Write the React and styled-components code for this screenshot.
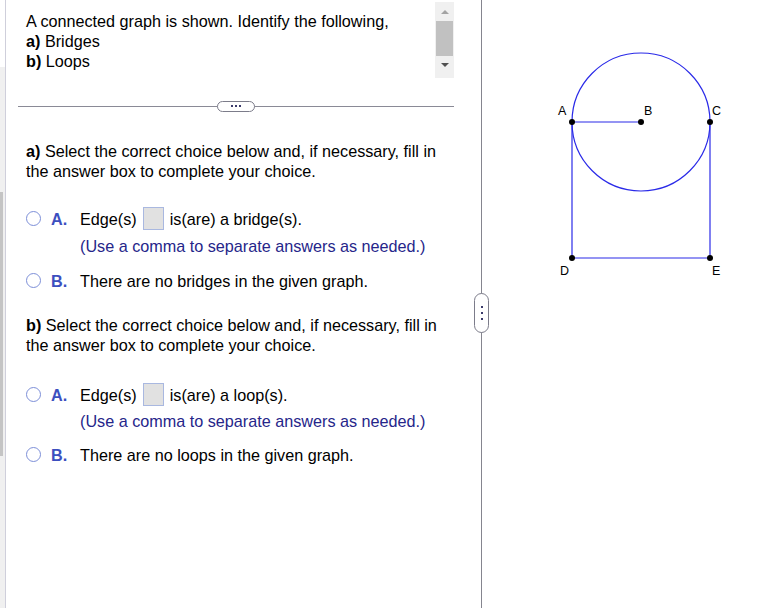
import styled, { createGlobalStyle } from 'styled-components'

const Global = createGlobalStyle`
    body {
        margin: 0;
        background: #fff;
        font-family: Arial, "Liberation Sans", sans-serif;
        color: #000;
    }
`

const Page = styled.div`
    display: flex;
    height: 608px;
    width: 767px;
    overflow: hidden;
`

const Gutter = styled.div`
    width: 5px;
    border-right: 1px solid #cfcfdb;
    display: flex;
    flex-direction: column;
`

const GutterTrack = styled.div`
    margin-top: 67px;
    flex: 1;
    background: #f0f0f0;
    padding-top: 125px;
`

const GutterThumb = styled.div`
    width: 3px;
    height: 264px;
    background: #c4c4c4;
`

const LeftPanel = styled.div`
    width: 475px;
    display: flex;
    flex-direction: column;
`

const Splitter = styled.div`
    width: 1px;
    background: #85858f;
    display: flex;
    align-items: center;
    justify-content: center;
    padding-top: 18px;
`

const SplitHandle = styled.div`
    flex-shrink: 0;
    width: 13px;
    height: 38px;
    border: 1px solid #7c7c8a;
    border-radius: 8px;
    background: #fff;
    display: flex;
    flex-direction: column;
    align-items: center;
    justify-content: center;
    gap: 4px;
`

const QuestionArea = styled.div`
    display: flex;
    height: 76px;
    margin-top: 2px;
    padding-right: 27px;
`

const QuestionText = styled.div`
    flex: 1;
    padding: 9px 0 0 20px;
    font-size: 16.2px;
    line-height: 20px;
`

const ScrollBar = styled.div`
    width: 19px;
    background: #f0f0f0;
    display: flex;
    flex-direction: column;
    align-items: center;
`

const Arrow = styled.div`
    width: 0;
    height: 0;
    border-left: 4px solid transparent;
    border-right: 4px solid transparent;
    ${p => p.up
        ? 'border-bottom: 4px solid #a3a3a3; margin: 8px 0 7px;'
        : 'border-top: 4px solid #505050; margin: 7px 0 0;'}
`

const Thumb = styled.div`
    width: 17px;
    height: 35px;
    background: #c1c1c1;
`

const Divider = styled.div`
    margin: 21px 27px 0 12px;
    height: 14px;
    display: flex;
    align-items: center;
    justify-content: center;
    background: linear-gradient(#8a8a96, #8a8a96) center / 100% 1px no-repeat;
`

const Pill = styled.div`
    width: 36px;
    height: 9px;
    border: 1px solid #7c7c8a;
    border-radius: 6px;
    background: #fff;
    display: flex;
    align-items: center;
    justify-content: center;
    gap: 2px;
`

const Dot = styled.span`
    width: 2px;
    height: 2px;
    background: #3b3b6b;
`

const Part = styled.div`
    padding-left: 20px;
    margin-top: ${p => p.top}px;
    font-size: 16.2px;
    line-height: 20px;
`

const Prompt = styled.div`
    width: 425px;
    margin-bottom: ${p => p.gap}px;
`

const Option = styled.div`
    display: flex;
    align-items: flex-start;
    margin-bottom: ${p => p.gap || 0}px;
`

const Radio = styled.span`
    width: 13px;
    height: 13px;
    border: 1.5px solid #7d8fd8;
    border-radius: 50%;
    margin: 2px 10px 0 0;
    flex-shrink: 0;
`

const Letter = styled.span`
    width: 29px;
    color: #3c4fbf;
    font-weight: bold;
`

const Body = styled.div`
    display: flex;
    flex-direction: column;
`

const Line = styled.div`
    display: flex;
    align-items: center;
    height: 20px;
`

const AnswerBox = styled.span`
    display: inline-block;
    box-sizing: border-box;
    width: 21px;
    height: 23px;
    margin: -2px 6px -1px 6px;
    background: #e1e1e1;
    border: 1px solid #a9b8e0;
`

const Hint = styled.div`
    color: #26268a;
    margin-top: ${p => p.gap}px;
`

const RightPanel = styled.div`
    flex: 1;
    padding: 40px 0 0 70px;
`

const Label = styled.text`
    font-family: Arial, "Liberation Sans", sans-serif;
    font-size: 12.5px;
    fill: #000;
`

function Graph () {
    const A = [20, 82], B = [89, 82], C = [158, 82], D = [20, 218], E = [158, 218]
    return (
        <svg width="190" height="240" viewBox="0 0 190 240">
            <g stroke="#2a2ae8" strokeWidth="1.2" fill="none">
                <circle cx={B[0]} cy={B[1]} r="69" />
                <line x1={A[0]} y1={A[1]} x2={B[0]} y2={B[1]} />
                <line x1={A[0]} y1={A[1]} x2={D[0]} y2={D[1]} />
                <line x1={C[0]} y1={C[1]} x2={E[0]} y2={E[1]} />
                <line x1={D[0]} y1={D[1]} x2={E[0]} y2={E[1]} />
            </g>
            {[A, B, C, D, E].map((p, i) => (
                <circle key={i} cx={p[0]} cy={p[1]} r="3" fill="#000" />
            ))}
            <Label x="6" y="75">A</Label>
            <Label x="92" y="75">B</Label>
            <Label x="160" y="75">C</Label>
            <Label x="8" y="235">D</Label>
            <Label x="160" y="235">E</Label>
        </svg>
    )
}

function Choice ({ letter, children, hint, hintGap, gap }) {
    return (
        <Option gap={gap}>
            <Radio />
            <Letter>{letter}.</Letter>
            <Body>
                <Line>{children}</Line>
                {hint && <Hint gap={hintGap}>{hint}</Hint>}
            </Body>
        </Option>
    )
}

function Section ({ part, top, gap, hintGap, optGap, thing, none }) {
    return (
        <Part top={top}>
            <Prompt gap={gap}>
                <b>{part})</b> Select the correct choice below and, if necessary, fill in the answer box to complete your choice.
            </Prompt>
            <Choice letter="A" gap={optGap} hintGap={hintGap} hint="(Use a comma to separate answers as needed.)">
                Edge(s)<AnswerBox />is(are) a {thing}(s).
            </Choice>
            <Choice letter="B">There are no {none} in the given graph.</Choice>
        </Part>
    )
}

export default function App () {
    return (
        <Page>
            <Global />
            <Gutter>
                <GutterTrack>
                    <GutterThumb />
                </GutterTrack>
            </Gutter>
            <LeftPanel>
                <QuestionArea>
                    <QuestionText>
                        A connected graph is shown. Identify the following,<br />
                        <b>a)</b> Bridges<br />
                        <b>b)</b> Loops
                    </QuestionText>
                    <ScrollBar>
                        <Arrow up />
                        <Thumb />
                        <Arrow />
                    </ScrollBar>
                </QuestionArea>
                <Divider>
                    <Pill><Dot /><Dot /><Dot /></Pill>
                </Divider>
                <Section part="a" top={28} gap={28} hintGap={7} optGap={15} thing="bridge" none="bridges" />
                <Section part="b" top={24} gap={30} hintGap={6} optGap={14} thing="loop" none="loops" />
            </LeftPanel>
            <Splitter>
                <SplitHandle><Dot /><Dot /><Dot /></SplitHandle>
            </Splitter>
            <RightPanel>
                <Graph />
            </RightPanel>
        </Page>
    )
}
